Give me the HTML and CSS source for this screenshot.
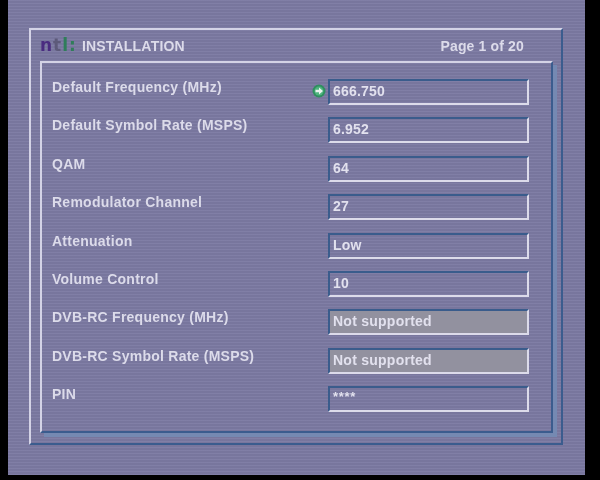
FILE: index.html
```html
<!DOCTYPE html>
<html lang="en">
<head>
<meta charset="utf-8">
<title>Installation</title>
<link rel="stylesheet" href="styles.css">
</head>
<body>
<main class="screen">
  <section class="outer">
    <header class="head">
      <div class="brand"><span class="logo"><span class="logo-p">n</span><span class="logo-t">t</span><span class="logo-g">l:</span></span><span class="title">INSTALLATION</span></div>
      <span class="page">Page 1 of 20</span>
    </header>
    <div class="inner">
      <div class="row"><span class="label">Default Frequency (MHz)</span>
        <span class="marker"><svg viewBox="0 0 14 14" width="14" height="14"><circle cx="7" cy="7" r="6.5" fill="#2f8f5f"/><circle cx="7" cy="7" r="4.5" fill="#4fb57f"/><path d="M3.5 5.8h3.5V3.6L11 7l-4 3.4V8.2H3.5z" fill="#e8f2ee"/></svg></span>
        <span class="field">666.750</span></div>
      <div class="row"><span class="label">Default Symbol Rate (MSPS)</span><span class="field">6.952</span></div>
      <div class="row"><span class="label">QAM</span><span class="field">64</span></div>
      <div class="row"><span class="label">Remodulator Channel</span><span class="field">27</span></div>
      <div class="row"><span class="label">Attenuation</span><span class="field">Low</span></div>
      <div class="row"><span class="label">Volume Control</span><span class="field">10</span></div>
      <div class="row"><span class="label">DVB-RC Frequency (MHz)</span><span class="field off">Not supported</span></div>
      <div class="row"><span class="label">DVB-RC Symbol Rate (MSPS)</span><span class="field off">Not supported</span></div>
      <div class="row"><span class="label">PIN</span><span class="field pin">****</span></div>
    </div>
  </section>
</main>
</body>
</html>
```

FILE: styles.css
```css
html, body { margin: 0; padding: 0; background: #000; }
body { width: 600px; height: 480px; overflow: hidden; font-family: "Liberation Sans", Arial, sans-serif; }
.screen {
  box-sizing: border-box;
  width: 577px; height: 475px; margin-left: 8px;
  padding: 28px 22px 30px 21px;
  background-color: #7c7aa3;
  background-image: repeating-linear-gradient(0deg, rgba(255,255,255,.035) 0 1px, rgba(0,0,0,.035) 1px 3px);
}
.outer {
  box-sizing: border-box; height: 417px; padding: 0 8px 10px 9px;
  border-top: 2px solid #d4d3e6; border-left: 2px solid #d4d3e6;
  border-right: 2px solid #3b5c8e; border-bottom: 2px solid #3b5c8e;
  display: flex; flex-direction: column;
  filter: blur(.5px);
}
.head {
  height: 31px; flex: none; display: flex; justify-content: space-between; align-items: center;
  padding: 0 29px 0 0;
  color: #dcdbea; font-weight: bold;
}
.brand { display: flex; align-items: center; gap: 5px; }
.logo { font-family: "DejaVu Sans", sans-serif; font-size: 17px; font-weight: bold; letter-spacing: 1px; line-height: 1; }
.logo-p { color: #4a2c80; }
.logo-t { color: #5d5a7a; }
.logo-g { color: #2f7d5a; }
.title { font-size: 14px; letter-spacing: .2px; }
.page { font-size: 14px; letter-spacing: .15px; }
.inner {
  box-sizing: border-box; flex: 1; min-height: 0;
  padding: 16px 22px 25px 10px;
  border-top: 2px solid #d4d3e6; border-left: 2px solid #d4d3e6;
  border-right: 2px solid #3b5c8e; border-bottom: 2px solid #3b5c8e;
  box-shadow: 4px 4px 0 #7589b2;
  display: grid; grid-auto-rows: 26px; row-gap: 12.4px;
}
.row { display: flex; position: relative; align-items: flex-start; justify-content: space-between; }
.label { color: #dcdbea; font-size: 14px; font-weight: bold; letter-spacing: .25px; line-height: 17px; }
.marker { position: absolute; left: 260px; top: 5px; width: 14px; height: 14px; }
.field {
  box-sizing: border-box; width: 201px; height: 26px; padding: 2px 0 0 3px;
  border-top: 2px solid #3a5c8c; border-left: 2px solid #3a5c8c;
  border-right: 2px solid #dcdbea; border-bottom: 2px solid #dcdbea;
  color: #e2e1ee; font-size: 14px; font-weight: bold; letter-spacing: .2px; line-height: 17px;
}
.off { background: #92919f; letter-spacing: .25px; }
.pin { padding-top: 0; font-size: 13px; letter-spacing: .7px; }
```
